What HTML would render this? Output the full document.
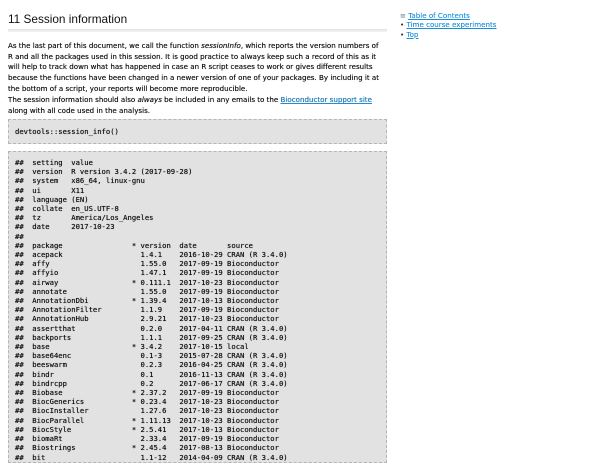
<!DOCTYPE html>
<html><head><style>
body{margin:0;width:600px;height:448px;overflow:hidden;background:#fff;position:relative;font-family:"DejaVu Sans","Liberation Sans",sans-serif;color:#111}
h1{position:absolute;left:8px;top:12px;margin:0;font:11.8px "Liberation Sans",sans-serif;color:#111;font-weight:normal}
.bar{position:absolute;left:8px;top:29px;width:379px;height:3px;background:linear-gradient(#dfe3e6,#f2f4f5)}
.p{position:absolute;left:8px;font-size:7.1px;line-height:10.7px;white-space:nowrap;color:#111;text-shadow:0 0 .4px #333}
a{color:#1a8fd8;text-decoration:underline}
.box{position:absolute;left:8px;width:377px;background:#e2e2e2;border:1px dashed #b5b5b5}
pre{margin:0;font:7.2px/9.2px "DejaVu Sans Mono","Liberation Mono",monospace;color:#111;text-shadow:0 0 .5px #222;position:absolute;left:6px;white-space:pre}
.side{position:absolute;left:400px;top:11px;font-size:7.1px;line-height:9.3px;text-shadow:0 0 .3px #4af}
.side div{white-space:nowrap}
</style></head><body>
<h1>11 Session information</h1>
<div class="bar"></div>
<div class="p" style="top:41px">As the last part of this document, we call the function <i>sessionInfo</i>, which reports the version numbers of<br>R and all the packages used in this session. It is good practice to always keep such a record of this as it<br>will help to track down what has happened in case an R script ceases to work or gives different results<br>because the functions have been changed in a newer version of one of your packages. By including it at<br>the bottom of a script, your reports will become more reproducible.</div>
<div class="p" style="top:95px">The session information should also <i>always</i> be included in any emails to the <a>Bioconductor support site</a><br>along with all code used in the analysis.</div>
<div class="box" style="top:119px;height:23px"><pre style="top:7px">devtools::session_info()</pre></div>
<div class="box" style="top:151px;height:310px"><pre style="top:6px">##  setting  value
##  version  R version 3.4.2 (2017-09-28)
##  system   x86_64, linux-gnu
##  ui       X11
##  language (EN)
##  collate  en_US.UTF-8
##  tz       America/Los_Angeles
##  date     2017-10-23
## 
##  package                * version  date       source
##  acepack                  1.4.1    2016-10-29 CRAN (R 3.4.0)
##  affy                     1.55.0   2017-09-19 Bioconductor
##  affyio                   1.47.1   2017-09-19 Bioconductor
##  airway                 * 0.111.1  2017-10-23 Bioconductor
##  annotate                 1.55.0   2017-09-19 Bioconductor
##  AnnotationDbi          * 1.39.4   2017-10-13 Bioconductor
##  AnnotationFilter         1.1.9    2017-09-19 Bioconductor
##  AnnotationHub            2.9.21   2017-10-23 Bioconductor
##  assertthat               0.2.0    2017-04-11 CRAN (R 3.4.0)
##  backports                1.1.1    2017-09-25 CRAN (R 3.4.0)
##  base                   * 3.4.2    2017-10-15 local
##  base64enc                0.1-3    2015-07-28 CRAN (R 3.4.0)
##  beeswarm                 0.2.3    2016-04-25 CRAN (R 3.4.0)
##  bindr                    0.1      2016-11-13 CRAN (R 3.4.0)
##  bindrcpp                 0.2      2017-06-17 CRAN (R 3.4.0)
##  Biobase                * 2.37.2   2017-09-19 Bioconductor
##  BiocGenerics           * 0.23.4   2017-10-23 Bioconductor
##  BiocInstaller            1.27.6   2017-10-23 Bioconductor
##  BiocParallel           * 1.11.13  2017-10-23 Bioconductor
##  BiocStyle              * 2.5.41   2017-10-13 Bioconductor
##  biomaRt                  2.33.4   2017-09-19 Bioconductor
##  Biostrings             * 2.45.4   2017-08-13 Bioconductor
##  bit                      1.1-12   2014-04-09 CRAN (R 3.4.0)</pre></div>
<div class="side">
<div><span style="color:#888">&#8801;</span> <a>Table of Contents</a></div>
<div><span style="color:#333">&bull;</span> <a>Time course experiments</a></div>
<div><span style="color:#333">&bull;</span> <a>Top</a></div>
</div>
</body></html>
